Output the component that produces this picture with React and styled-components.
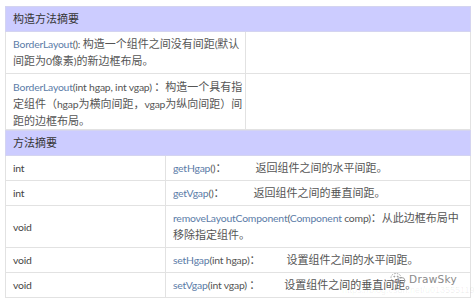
import React from 'react';
import styled, { createGlobalStyle } from 'styled-components';

const GlobalStyle = createGlobalStyle`
  body {
    margin: 0;
    background: #ffffff;
    font-family: "Noto Sans CJK SC", sans-serif;
  }
`;

const Page = styled.div`
  position: relative;
  width: 474px;
  height: 299px;
  padding: 6px 4px 0 5px;
  box-sizing: border-box;
  overflow: hidden;
`;

const Table = styled.table`
  width: 465px;
  border-collapse: collapse;
  table-layout: fixed;
  font-family: "Noto Sans CJK SC", sans-serif;
  font-size: 11px;
  line-height: 17px;
  color: #555555;
`;

const Row = styled.tr`
  height: ${(p) => p.$h}px;
`;

const HeadCell = styled.th`
  background: #ccccff;
  border: 1px solid #d4d4f0;
  color: #363636;
  font-weight: normal;
  text-align: left;
  padding: 3px 7px 4px;
`;

const Cell = styled.td`
  border: 1px solid #e2e2e2;
  padding: ${(p) => (p.$tight ? '4px 7px 0' : '3px 7px 4px')};
  vertical-align: ${(p) => (p.$top ? 'top' : 'middle')};
  white-space: nowrap;
  overflow: hidden;
`;

/* Calibri-like latin text: narrow humanist sans */
const Latin = styled.span`
  font-family: Lato, sans-serif;
  font-size: 10.4px;
  letter-spacing: -0.2px;
  line-height: 12px;
  color: ${(p) => (p.$link ? '#5b7ca8' : p.$dark ? '#444444' : '#555555')};
`;

const Desc = styled.span`
  margin-left: ${(p) => p.$gap}px;
`;

const Watermark = styled.div`
  position: absolute;
  left: 390px;
  top: 272px;
  display: flex;
  align-items: center;
  gap: 3px;
  color: #8a8a8a;
  font-family: "DejaVu Sans", sans-serif;
  font-size: 10.5px;
  letter-spacing: 0.3px;
`;

const Url = styled.div`
  position: absolute;
  left: 342px;
  top: 285px;
  color: rgba(0, 0, 0, 0.07);
  font-family: "Liberation Sans", sans-serif;
  font-size: 9px;
`;

const WeChatIcon = () => (
  <svg width="16" height="14" viewBox="0 0 16 14" fill="none" stroke="#9a9a9a" strokeWidth="0.9">
    <ellipse cx="6" cy="5.5" rx="5" ry="4" strokeDasharray="1.5 1.2" />
    <path d="M3.5 9.2 L2.6 11.4 L5.2 9.8" />
    <ellipse cx="11" cy="8.6" rx="4" ry="3.2" />
    <circle cx="4.3" cy="4.6" r="0.5" fill="#9a9a9a" />
    <circle cx="7.7" cy="4.6" r="0.5" fill="#9a9a9a" />
  </svg>
);

const methods = [
  { type: 'int', name: 'getHgap', args: '()', desc: '返回组件之间的水平间距。', gap: 29 },
  { type: 'int', name: 'getVgap', args: '()', desc: '返回组件之间的垂直间距。', gap: 29 },
  { type: 'void', name: 'setHgap', args: '(int hgap)', desc: '设置组件之间的水平间距。', gap: 26 },
  { type: 'void', name: 'setVgap', args: '(int vgap) ', desc: '设置组件之间的垂直间距。', gap: 24 },
];

const MethodRow = ({ m }) => (
  <Row $h={24}>
    <Cell>
      <Latin $dark>{m.type}</Latin>
    </Cell>
    <Cell>
      <Latin $link>{m.name}</Latin>
      <Latin>{m.args}</Latin>：<Desc $gap={m.gap}>{m.desc}</Desc>
    </Cell>
  </Row>
);

const App = () => {
  return (
    <Page>
      <GlobalStyle />
      <Table>
        <colgroup>
          <col style={{ width: '240px' }} />
          <col style={{ width: '225px' }} />
        </colgroup>
        <thead>
          <Row $h={24}>
            <HeadCell colSpan={2}>构造方法摘要</HeadCell>
          </Row>
        </thead>
        <tbody>
          <Row $h={40}>
            <Cell $top>
              <Latin $link>BorderLayout</Latin>
              <Latin>(): </Latin>构造一个组件之间没有间距<Latin>(</Latin>默认
              <br />
              间距为<Latin>0</Latin>像素<Latin>)</Latin>的新边框布局。
            </Cell>
            <Cell />
          </Row>
          <Row $h={55}>
            <Cell $top $tight>
              <Latin $link>BorderLayout</Latin>
              <Latin>(int hgap, int vgap) </Latin>：构造一个具有指
              <br />
              定组件（<Latin>hgap</Latin>为横向间距，<Latin>vgap</Latin>为纵向间距）间
              <br />
              距的边框布局。
            </Cell>
            <Cell $tight />
          </Row>
        </tbody>
      </Table>
      <Table>
        <colgroup>
          <col style={{ width: '160px' }} />
          <col style={{ width: '305px' }} />
        </colgroup>
        <thead>
          <Row $h={24}>
            <HeadCell colSpan={2}>方法摘要</HeadCell>
          </Row>
        </thead>
        <tbody>
          <MethodRow m={methods[0]} />
          <MethodRow m={methods[1]} />
          <Row $h={41}>
            <Cell>
              <Latin $dark>void</Latin>
            </Cell>
            <Cell>
              <Latin $link>removeLayoutComponent</Latin>
              <Latin>(</Latin>
              <Latin $link>Component</Latin>
              <Latin> comp)</Latin>：<Desc $gap={0}>从此边框布局中</Desc>
              <br />
              移除指定组件。
            </Cell>
          </Row>
          <MethodRow m={methods[2]} />
          <MethodRow m={methods[3]} />
        </tbody>
      </Table>
      <Url>https://blog.csdn.net/u013555119</Url>
      <Watermark>
        <WeChatIcon />
        DrawSky
      </Watermark>
    </Page>
  );
};

export default App;
